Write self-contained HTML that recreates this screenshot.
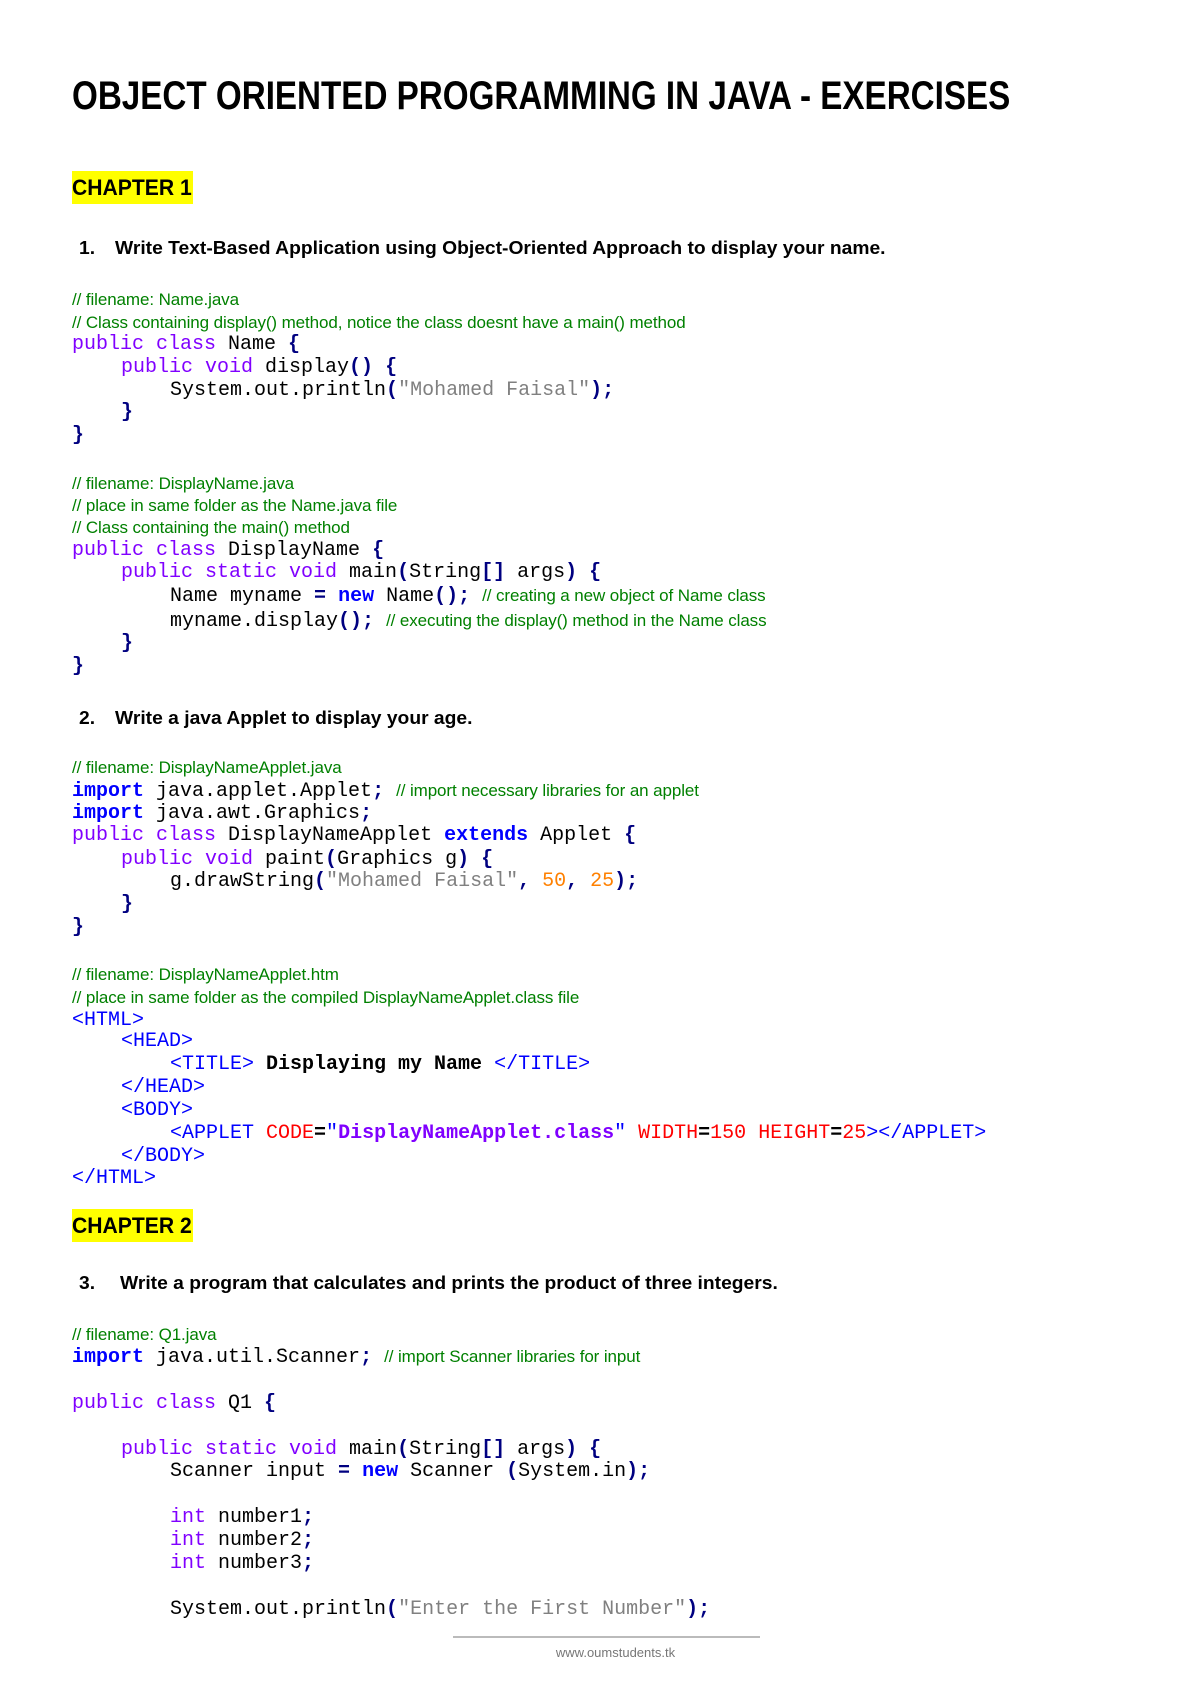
<!DOCTYPE html>
<html><head><meta charset="utf-8"><style>
body{margin:0;background:#fff;width:1200px;height:1696px;position:relative;overflow:hidden;font-family:"Liberation Sans",sans-serif}
.l{position:absolute;height:22px;line-height:22px;white-space:pre;font-family:"Liberation Mono",monospace;font-size:20px;color:#000}
.c{font-family:"Liberation Sans",sans-serif;font-size:17px;color:#008000;letter-spacing:-0.1px}
.k{color:#8000ff}.b{color:#0000ff;font-weight:bold}.p{color:#000080;font-weight:bold}.s{color:#808080}.n{color:#ff8000}
.t{color:#0000ff}.r{color:#ff0000}.v{color:#8000ff;font-weight:bold}
.title{position:absolute;left:72px;top:74px;font-weight:bold;font-size:40px;line-height:44px;white-space:nowrap;transform:scaleX(0.83);transform-origin:left}
.ch{position:absolute;left:72px;width:121px;height:33px;background:#ffff00}
.ch span{position:absolute;left:0;top:5px;font-weight:bold;font-size:22px;line-height:24px;white-space:nowrap;transform:scaleX(0.96);transform-origin:left}
.q{position:absolute;font-weight:bold;font-size:18px;line-height:22px;white-space:nowrap;transform:scaleX(1.07);transform-origin:left}
</style></head><body>
<div class="title">OBJECT ORIENTED PROGRAMMING IN JAVA - EXERCISES</div>
<div class="ch" style="top:171px"><span>CHAPTER 1</span></div>
<div class="q" style="left:79px;top:237px">1.</div>
<div class="q" style="left:115px;top:237px">Write Text-Based Application using Object-Oriented Approach to display your name.</div>

<div class="l c" style="left:72px;top:289px">// filename: Name.java</div>
<div class="l c" style="left:72px;top:312px">// Class containing display() method, notice the class doesnt have a main() method</div>
<div class="l" style="left:72px;top:334px"><span class="k">public class</span> Name <span class="p">{</span></div>
<div class="l" style="left:121px;top:357px"><span class="k">public void</span> display<span class="p">()</span> <span class="p">{</span></div>
<div class="l" style="left:170px;top:380px">System.out.println<span class="p">(</span><span class="s">"Mohamed Faisal"</span><span class="p">);</span></div>
<div class="l p" style="left:121px;top:402px">}</div>
<div class="l p" style="left:72px;top:425px">}</div>

<div class="l c" style="left:72px;top:473px">// filename: DisplayName.java</div>
<div class="l c" style="left:72px;top:495px">// place in same folder as the Name.java file</div>
<div class="l c" style="left:72px;top:517px">// Class containing the main() method</div>
<div class="l" style="left:72px;top:540px"><span class="k">public class</span> DisplayName <span class="p">{</span></div>
<div class="l" style="left:121px;top:562px"><span class="k">public static void</span> main<span class="p">(</span>String<span class="p">[]</span> args<span class="p">)</span> <span class="p">{</span></div>
<div class="l" style="left:170px;top:585px">Name myname <span class="p">=</span> <span class="b">new</span> Name<span class="p">();</span> <span class="c">// creating a new object of Name class</span></div>
<div class="l" style="left:170px;top:610px">myname.display<span class="p">();</span> <span class="c">// executing the display() method in the Name class</span></div>
<div class="l p" style="left:121px;top:633px">}</div>
<div class="l p" style="left:72px;top:656px">}</div>

<div class="q" style="left:79px;top:707px">2.</div>
<div class="q" style="left:115px;top:707px">Write a java Applet to display your age.</div>

<div class="l c" style="left:72px;top:757px">// filename: DisplayNameApplet.java</div>
<div class="l" style="left:72px;top:780px"><span class="b">import</span> java.applet.Applet<span class="p">;</span> <span class="c">// import necessary libraries for an applet</span></div>
<div class="l" style="left:72px;top:803px"><span class="b">import</span> java.awt.Graphics<span class="p">;</span></div>
<div class="l" style="left:72px;top:825px"><span class="k">public class</span> DisplayNameApplet <span class="b">extends</span> Applet <span class="p">{</span></div>
<div class="l" style="left:121px;top:849px"><span class="k">public void</span> paint<span class="p">(</span>Graphics g<span class="p">)</span> <span class="p">{</span></div>
<div class="l" style="left:170px;top:871px">g.drawString<span class="p">(</span><span class="s">"Mohamed Faisal"</span><span class="p">,</span> <span class="n">50</span><span class="p">,</span> <span class="n">25</span><span class="p">);</span></div>
<div class="l p" style="left:121px;top:894px">}</div>
<div class="l p" style="left:72px;top:917px">}</div>

<div class="l c" style="left:72px;top:964px">// filename: DisplayNameApplet.htm</div>
<div class="l c" style="left:72px;top:987px">// place in same folder as the compiled DisplayNameApplet.class file</div>
<div class="l t" style="left:72px;top:1010px">&lt;HTML&gt;</div>
<div class="l t" style="left:121px;top:1031px">&lt;HEAD&gt;</div>
<div class="l t" style="left:170px;top:1054px">&lt;TITLE&gt; <b style="color:#000">Displaying my Name</b> &lt;/TITLE&gt;</div>
<div class="l t" style="left:121px;top:1077px">&lt;/HEAD&gt;</div>
<div class="l t" style="left:121px;top:1100px">&lt;BODY&gt;</div>
<div class="l t" style="left:170px;top:1123px">&lt;APPLET <span class="r">CODE</span><b style="color:#000">=</b>"<span class="v">DisplayNameApplet.class</span>" <span class="r">WIDTH</span><b style="color:#000">=</b><span class="r">150</span> <span class="r">HEIGHT</span><b style="color:#000">=</b><span class="r">25</span>&gt;&lt;/APPLET&gt;</div>
<div class="l t" style="left:121px;top:1146px">&lt;/BODY&gt;</div>
<div class="l t" style="left:72px;top:1168px">&lt;/HTML&gt;</div>

<div class="ch" style="top:1209px"><span>CHAPTER 2</span></div>
<div class="q" style="left:79px;top:1272px">3.</div>
<div class="q" style="left:120px;top:1272px">Write a program that calculates and prints the product of three integers.</div>

<div class="l c" style="left:72px;top:1324px">// filename: Q1.java</div>
<div class="l" style="left:72px;top:1346px"><span class="b">import</span> java.util.Scanner<span class="p">;</span> <span class="c">// import Scanner libraries for input</span></div>
<div class="l" style="left:72px;top:1393px"><span class="k">public class</span> Q1 <span class="p">{</span></div>
<div class="l" style="left:121px;top:1439px"><span class="k">public static void</span> main<span class="p">(</span>String<span class="p">[]</span> args<span class="p">)</span> <span class="p">{</span></div>
<div class="l" style="left:170px;top:1461px">Scanner input <span class="p">=</span> <span class="b">new</span> Scanner <span class="p">(</span>System.in<span class="p">);</span></div>
<div class="l" style="left:170px;top:1507px"><span class="k">int</span> number1<span class="p">;</span></div>
<div class="l" style="left:170px;top:1530px"><span class="k">int</span> number2<span class="p">;</span></div>
<div class="l" style="left:170px;top:1553px"><span class="k">int</span> number3<span class="p">;</span></div>
<div class="l" style="left:170px;top:1599px">System.out.println<span class="p">(</span><span class="s">"Enter the First Number"</span><span class="p">);</span></div>

<div style="position:absolute;left:453px;top:1636px;width:307px;height:2px;background:#bbb"></div>
<div style="position:absolute;left:543px;top:1645px;width:145px;text-align:center;font-size:13px;color:#777;line-height:16px">www.oumstudents.tk</div>
</body></html>
